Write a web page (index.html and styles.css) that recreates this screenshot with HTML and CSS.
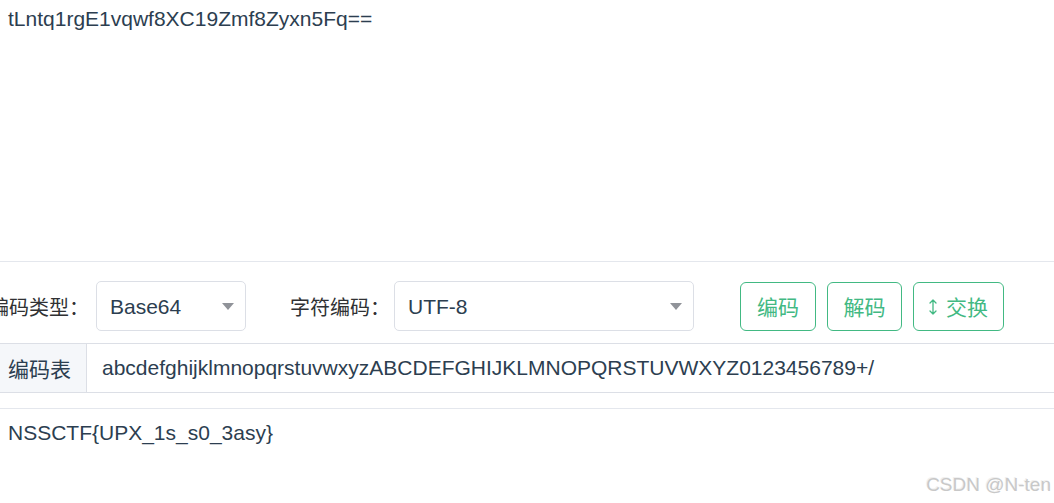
FILE: index.html
```html
<!DOCTYPE html>
<html>
<head>
<meta charset="utf-8">
<link rel="stylesheet" href="styles.css">
</head>
<body>
<div class="page">
  <div class="input-area">tLntq1rgE1vqwf8XC19Zmf8Zyxn5Fq==</div>
  <div class="form-row">
    <span class="label first">编码类型：</span>
    <div class="select small"><span>Base64</span><i class="caret"></i></div>
    <span class="label second">字符编码：</span>
    <div class="select large"><span>UTF-8</span><i class="caret"></i></div>
    <div class="buttons">
      <button class="btn b1">编码</button>
      <button class="btn b2">解码</button>
      <button class="btn b3"><svg class="arrow" width="8" height="16" viewBox="0 0 8 16"><path d="M4 1 V15 M1 4 L4 1 L7 4 M1 12 L4 15 L7 12" fill="none" stroke="#42b983" stroke-width="1.3" stroke-linecap="round" stroke-linejoin="round"/></svg>交换</button>
    </div>
  </div>
  <div class="table-row">
    <div class="prepend">编码表</div>
    <div class="table-value">abcdefghijklmnopqrstuvwxyzABCDEFGHIJKLMNOPQRSTUVWXYZ0123456789+/</div>
  </div>
  <div class="output-area">NSSCTF{UPX_1s_s0_3asy}</div>
  <div class="watermark">CSDN @N-ten</div>
</div>
</body>
</html>
```
FILE: styles.css
```css
html, body {
  margin: 0;
  padding: 0;
  background: #fff;
  overflow: hidden;
}
.page {
  width: 1054px;
  height: 503px;
  position: relative;
  font-family: "Liberation Sans", Arial, "Noto Sans CJK SC", sans-serif;
  color: #2c3e50;
  font-size: 21px;
}
.input-area {
  height: 262px;
  box-sizing: border-box;
  border-bottom: 1px solid #e4e7ed;
  padding: 7px 0 0 8px;
  line-height: 24px;
  white-space: nowrap;
}
.form-row {
  display: flex;
  align-items: center;
  height: 50px;
  padding-top: 19px;
  padding-bottom: 12px;
  box-sizing: content-box;
}
.label {
  font-family: "Noto Sans CJK SC", sans-serif;
  font-size: 20px;
  color: #303133;
  white-space: nowrap;
}
.label.first {
  margin-left: -11px;
  margin-right: 7px;
}
.label.second {
  margin-left: 44px;
  margin-right: 4px;
}
.select {
  height: 50px;
  box-sizing: border-box;
  border: 1px solid #dcdfe6;
  border-radius: 5px;
  display: flex;
  align-items: center;
  justify-content: space-between;
  padding: 0 11px 0 13px;
  font-size: 21px;
  color: #2c3e50;
}
.select span {
  padding-top: 2px;
}
.select.small { width: 150px; }
.select.large { width: 300px; }
.caret {
  width: 0;
  height: 0;
  border-left: 6.5px solid transparent;
  border-right: 6.5px solid transparent;
  border-top: 7px solid #909399;
  margin-top: 1px;
}
.buttons {
  display: flex;
  gap: 11px;
  margin-left: 46px;
}
.btn {
  height: 49px;
  box-sizing: border-box;
  border: 1px solid #42b983;
  border-radius: 6px;
  background: #fff;
  color: #42b983;
  font-family: "Noto Sans CJK SC", sans-serif;
  font-size: 21px;
  padding: 0;
  display: flex;
  align-items: center;
  justify-content: center;
}
.b1 { width: 76px; }
.b2 { width: 75px; }
.b3 { width: 91px; }
.arrow {
  margin-right: 9px;
  margin-top: 2px;
}
.table-row {
  display: flex;
  height: 50px;
  box-sizing: border-box;
  border-top: 1px solid #dcdfe6;
  border-bottom: 1px solid #dcdfe6;
}
.prepend {
  width: 87px;
  box-sizing: border-box;
  background: #f5f7fa;
  border-right: 1px solid #dcdfe6;
  font-family: "Noto Sans CJK SC", sans-serif;
  font-size: 21px;
  color: #2c3e50;
  display: flex;
  align-items: center;
  padding-left: 8px;
}
.table-value {
  display: flex;
  align-items: center;
  padding-left: 15px;
  font-size: 21px;
  color: #2c3e50;
  white-space: nowrap;
}
.output-area {
  margin-top: 15px;
  border-top: 1px solid #e4e7ed;
  padding: 12px 0 0 8px;
  line-height: 24px;
}
.watermark {
  position: absolute;
  right: 3px;
  bottom: 7px;
  font-size: 19px;
  color: #c8c8c8;
  text-shadow: 1px 1px 0 #fff, -1px -1px 0 #f0f0f0;
}
```
